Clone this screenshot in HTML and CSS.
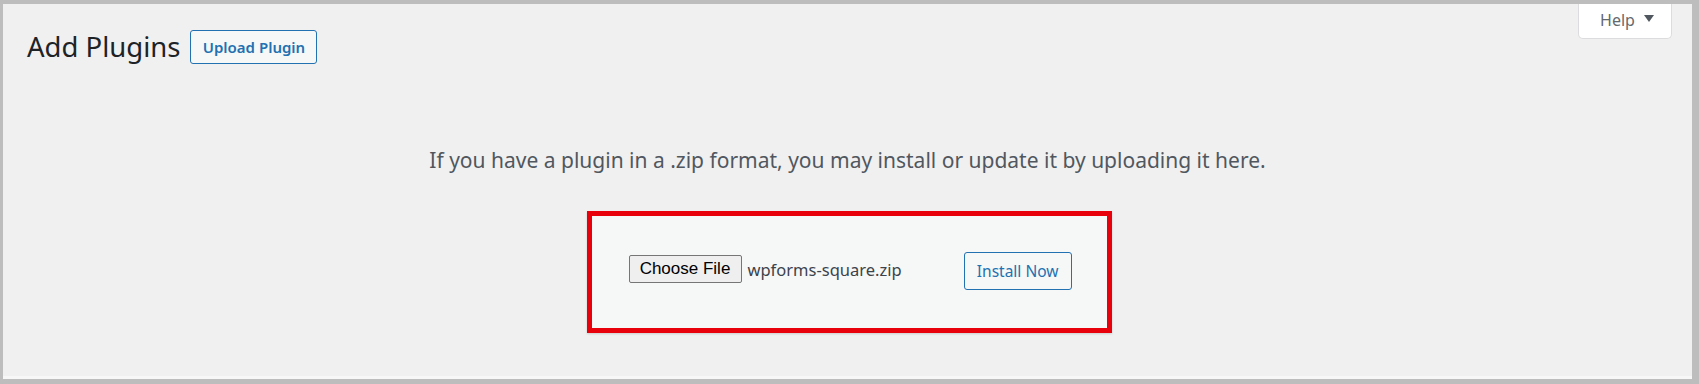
FILE: index.html
```html
<!DOCTYPE html>
<html lang="en">
<head>
<meta charset="utf-8">
<title>Add Plugins</title>
<link rel="stylesheet" href="styles.css">
</head>
<body>
<div class="screen">
  <div class="help-tab">
    <button class="help-btn">Help <span class="caret"></span></button>
  </div>
  <div class="wrap">
    <div class="header">
      <h1 class="title">Add Plugins</h1>
      <a class="page-title-action" href="#">Upload Plugin</a>
    </div>
    <p class="install-help">If you have a plugin in a .zip format, you may install or update it by uploading it here.</p>
    <div class="form-row">
      <form class="upload-form">
        <span class="file-btn">Choose File</span>
        <span class="file-name">wpforms-square.zip</span>
        <span class="install-btn">Install Now</span>
      </form>
    </div>
  </div>
</div>
</body>
</html>
```

FILE: styles.css
```css
html, body {
  margin: 0;
  padding: 0;
}
body {
  background: #bdbdbd;
  width: 1699px;
  height: 384px;
  overflow: hidden;
  font-family: "Noto Sans", "Open Sans", sans-serif;
}
.screen {
  position: relative;
  margin: 4px 7px 0 3px;
  height: 372px;
  background: #f0f0f1;
  border-bottom: 3px solid #f7f7f7;
}
.help-tab {
  position: absolute;
  top: 0;
  right: 20px;
}
.help-btn {
  box-sizing: border-box;
  width: 94px;
  height: 35px;
  background: #fff;
  border: 1px solid #dcdcde;
  border-top: none;
  border-radius: 0 0 5px 5px;
  color: #646970;
  font-family: inherit;
  font-size: 16px;
  display: flex;
  align-items: center;
  justify-content: center;
  gap: 9px;
  padding: 0 0 2px 4px;
}
.caret {
  width: 0;
  height: 0;
  border-left: 5px solid transparent;
  border-right: 5px solid transparent;
  border-top: 7px solid #50575e;
  margin-top: -4px;
}
.wrap {
  padding: 0 0 0 24px;
}
.header {
  display: flex;
  align-items: center;
  gap: 10px;
  padding-top: 24px;
}
.title {
  margin: 0;
  font-weight: 400;
  font-size: 27.5px;
  line-height: 38px;
  color: #1d2327;
}
.page-title-action {
  box-sizing: border-box;
  height: 34px;
  width: 127px;
  padding: 0;
  display: flex;
  align-items: center;
  justify-content: center;
  border: 1px solid #2271b1;
  border-radius: 3px;
  background: #f6f7f7;
  color: #2271b1;
  font-size: 15px;
  font-weight: 600;
  text-decoration: none;
}
.install-help {
  margin: 80px 0 0 -24px;
  text-align: center;
  font-size: 21px;
  color: #50575e;
  line-height: 28px;
}
.form-row {
  display: flex;
  justify-content: center;
  margin: 37px 0 0 -24px;
  padding-left: 3px;
}
.upload-form {
  box-sizing: border-box;
  width: 525px;
  height: 122px;
  margin: 0;
  border: 5px solid #e8000b;
  background: #f6f7f7;
  display: flex;
  align-items: center;
  padding: 0 0 0 37px;
  box-shadow: 0 1px 2px rgba(0,0,0,0.15);
}
.file-btn {
  box-sizing: border-box;
  height: 28px;
  width: 113px;
  display: flex;
  align-items: center;
  justify-content: center;
  background: #efefef;
  border: 1px solid #767676;
  border-radius: 2px;
  font-family: "Liberation Sans", Arial, sans-serif;
  font-size: 17px;
  color: #000;
  margin-top: -6px;
}
.file-name {
  margin-left: 6px;
  font-size: 16.5px;
  color: #3c434a;
  margin-top: -6px;
}
.install-btn {
  box-sizing: border-box;
  margin-left: 62px;
  margin-top: -2px;
  height: 38px;
  width: 108px;
  display: flex;
  align-items: center;
  justify-content: center;
  border: 1px solid #2271b1;
  border-radius: 3px;
  background: #f6f7f7;
  color: #2271b1;
  font-size: 15.5px;
}
```
